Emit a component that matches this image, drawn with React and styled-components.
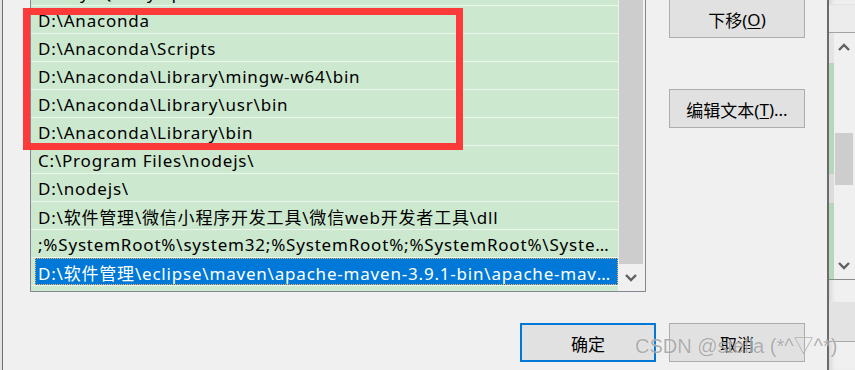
import styled, { createGlobalStyle } from 'styled-components';

const GlobalStyle = createGlobalStyle`
  html, body {
    margin: 0;
    padding: 0;
    background: #f0f0f0;
  }
  body {
    font-family: "Noto Sans", "Noto Sans CJK SC", sans-serif;
  }
`;

const Page = styled.div`
  position: relative;
  width: 855px;
  height: 370px;
  overflow: hidden;
  display: flex;
  background: #f0f0f0;
`;

const EdgeStrip = styled.div`
  flex: none;
  width: 2px;
  background: #e2e2e2;
  border-right: 1px solid #707070;
`;

const Dialog = styled.div`
  flex: none;
  width: 824px;
  box-sizing: border-box;
  padding: 0 22px 0 27px;
  display: flex;
  flex-direction: column;
`;

const Body = styled.div`
  display: flex;
  gap: 23px;
  margin-top: -23px;
`;

const ListBox = styled.div`
  flex: none;
  width: 616px;
  box-sizing: border-box;
  border: 1px solid #828790;
  background: #cce8cf;
  display: flex;
`;

const ListBody = styled.div`
  flex: 1;
  min-width: 0;
  padding-bottom: 5px;
`;

const Row = styled.div`
  height: 28px;
  box-sizing: border-box;
  border-bottom: 1px solid #eaf5eb;
  display: flex;
`;

const Cell = styled.div`
  flex: 1;
  min-width: 0;
  margin-left: 4px;
  padding: 0 6px 0 3px;
  display: flex;
  align-items: center;
  background: ${(p) => (p.$selected ? '#0078d7' : 'transparent')};
  color: ${(p) => (p.$selected ? '#ffffff' : '#000000')};
  outline: ${(p) => (p.$selected ? '1px dotted #f3b36b' : 'none')};
  outline-offset: -1px;
`;

const CellText = styled.span`
  overflow: hidden;
  white-space: nowrap;
  text-overflow: ellipsis;
  font-size: 17px;
  letter-spacing: 0.8px;
  padding-top: 2px;
`;

const ScrollBar = styled.div`
  flex: none;
  width: 27px;
  display: flex;
  flex-direction: column;
  background: #f0f0f0;
`;

const Thumb = styled.div`
  flex: ${(p) => (p.$size ? 'none' : '1')};
  height: ${(p) => (p.$size ? `${p.$size}px` : 'auto')};
  margin: 0 2px 0 1px;
  background: #cdcdcd;
`;

const Track = styled.div`
  flex: ${(p) => (p.$size ? 'none' : '1')};
  height: ${(p) => (p.$size ? `${p.$size}px` : 'auto')};
`;

const ArrowBox = styled.div`
  flex: none;
  height: 27px;
  display: flex;
  align-items: center;
  justify-content: center;
  padding-right: 2px;
`;

const SideButtons = styled.div`
  flex: none;
  width: 136px;
  padding-top: 22px;
  display: flex;
  flex-direction: column;
`;

const Button = styled.div`
  flex: none;
  width: 136px;
  height: 39px;
  box-sizing: border-box;
  margin-top: ${(p) => p.$gap || 0}px;
  background: #e1e1e1;
  border: ${(p) => (p.$primary ? '2px solid #0078d7' : '1px solid #adadad')};
  color: #000;
  font-size: 17px;
  display: flex;
  align-items: center;
  justify-content: center;
  padding-top: 1px;

  u {
    text-decoration-thickness: 1px;
    text-underline-offset: 2px;
  }
`;

const Footer = styled.div`
  display: flex;
  justify-content: flex-end;
  gap: 13px;
  margin-top: 31px;
`;

const WindowEdge = styled.div`
  flex: none;
  width: 2px;
  background: #6b6b6b;
`;

const BackWindow = styled.div`
  flex: 1;
  display: flex;
  flex-direction: column;
  background: #f0f0f0;
  box-shadow: inset 5px 0 5px -3px rgba(0, 0, 0, 0.12);
`;

const BackTop = styled.div`
  flex: none;
  height: 29px;
  margin-top: 4px;
  box-sizing: border-box;
  border-top: 1px solid #e2e2e2;
  border-bottom: 1px solid #a3a3a3;
  background: #ececec;
`;

const BackList = styled.div`
  flex: none;
  height: 247px;
  box-sizing: border-box;
  border-bottom: 1px solid #8a8a8a;
  display: flex;
`;

const BackStrip = styled.div`
  flex: none;
  width: 5px;
  display: flex;
  flex-direction: column;
`;

const StripPart = styled.div`
  flex: ${(p) => (p.$size ? 'none' : '1')};
  height: ${(p) => (p.$size ? `${p.$size}px` : 'auto')};
  background: ${(p) => p.$color};
`;

const BackScroll = styled.div`
  flex: 1;
  display: flex;
  flex-direction: column;
  background: #f0f0f0;
`;

const BackButton = styled.div`
  flex: none;
  height: 40px;
  margin-top: 22px;
  box-sizing: border-box;
  background: #e3e3e3;
  border-bottom: 1px solid #a8a8a8;
`;

const RedBox = styled.div`
  position: absolute;
  left: 23px;
  top: 8px;
  width: 440px;
  height: 142px;
  box-sizing: border-box;
  border: 7px solid #fc3a3a;
  pointer-events: none;
`;

const Watermark = styled.div`
  position: absolute;
  left: 635px;
  top: 335px;
  font-family: "Liberation Sans", "Noto Sans CJK SC", sans-serif;
  font-size: 20px;
  line-height: 22px;
  white-space: nowrap;
  color: rgba(120, 120, 120, 0.6);
  text-shadow: 0 0 1px rgba(255, 255, 255, 0.9);
  pointer-events: none;
`;

const Chevron = ({ up }) => (
  <svg width="12" height="8" viewBox="0 0 12 8">
    <polyline
      points={up ? '1,7 6,2 11,7' : '1,1 6,6 11,1'}
      fill="none"
      stroke="#606060"
      strokeWidth="2.4"
    />
  </svg>
);

const paths = [
  'D:\\MySQL\\mysql-8.0.31-winx64\\bin',
  'D:\\Anaconda',
  'D:\\Anaconda\\Scripts',
  'D:\\Anaconda\\Library\\mingw-w64\\bin',
  'D:\\Anaconda\\Library\\usr\\bin',
  'D:\\Anaconda\\Library\\bin',
  'C:\\Program Files\\nodejs\\',
  'D:\\nodejs\\',
  'D:\\软件管理\\微信小程序开发工具\\微信web开发者工具\\dll',
  ';%SystemRoot%\\system32;%SystemRoot%;%SystemRoot%\\System32\\Wbem',
  'D:\\软件管理\\eclipse\\maven\\apache-maven-3.9.1-bin\\apache-maven-3.9.1\\bin',
];

const App = () => {
  return (
    <>
      <GlobalStyle />
      <Page>
        <EdgeStrip />
        <Dialog>
          <Body>
            <ListBox>
              <ListBody>
                {paths.map((p, i) => (
                  <Row key={i}>
                    <Cell $selected={i === paths.length - 1}>
                      <CellText>{p}</CellText>
                    </Cell>
                  </Row>
                ))}
              </ListBody>
              <ScrollBar>
                <Thumb />
                <ArrowBox>
                  <Chevron />
                </ArrowBox>
              </ScrollBar>
            </ListBox>
            <SideButtons>
              <Button>
                下移(<u>O</u>)
              </Button>
              <Button $gap={51}>
                编辑文本(<u>T</u>)...
              </Button>
            </SideButtons>
          </Body>
          <Footer>
            <Button $primary>确定</Button>
            <Button>取消</Button>
          </Footer>
        </Dialog>
        <WindowEdge />
        <BackWindow>
          <BackTop />
          <BackList>
            <BackStrip>
              <StripPart $size={30} $color="#e4e4e4" />
              <StripPart $size={111} $color="#b6d7bc" />
              <StripPart $size={29} $color="#dcdcdc" />
              <StripPart $color="#b6d7bc" />
            </BackStrip>
            <BackScroll>
              <ArrowBox>
                <Chevron up />
              </ArrowBox>
              <Track $size={73} />
              <Thumb $size={52} />
              <Track />
              <ArrowBox>
                <Chevron />
              </ArrowBox>
            </BackScroll>
          </BackList>
          <BackButton />
        </BackWindow>
        <RedBox />
        <Watermark>CSDN @stella (*^▽^*)</Watermark>
      </Page>
    </>
  );
};

export default App;
